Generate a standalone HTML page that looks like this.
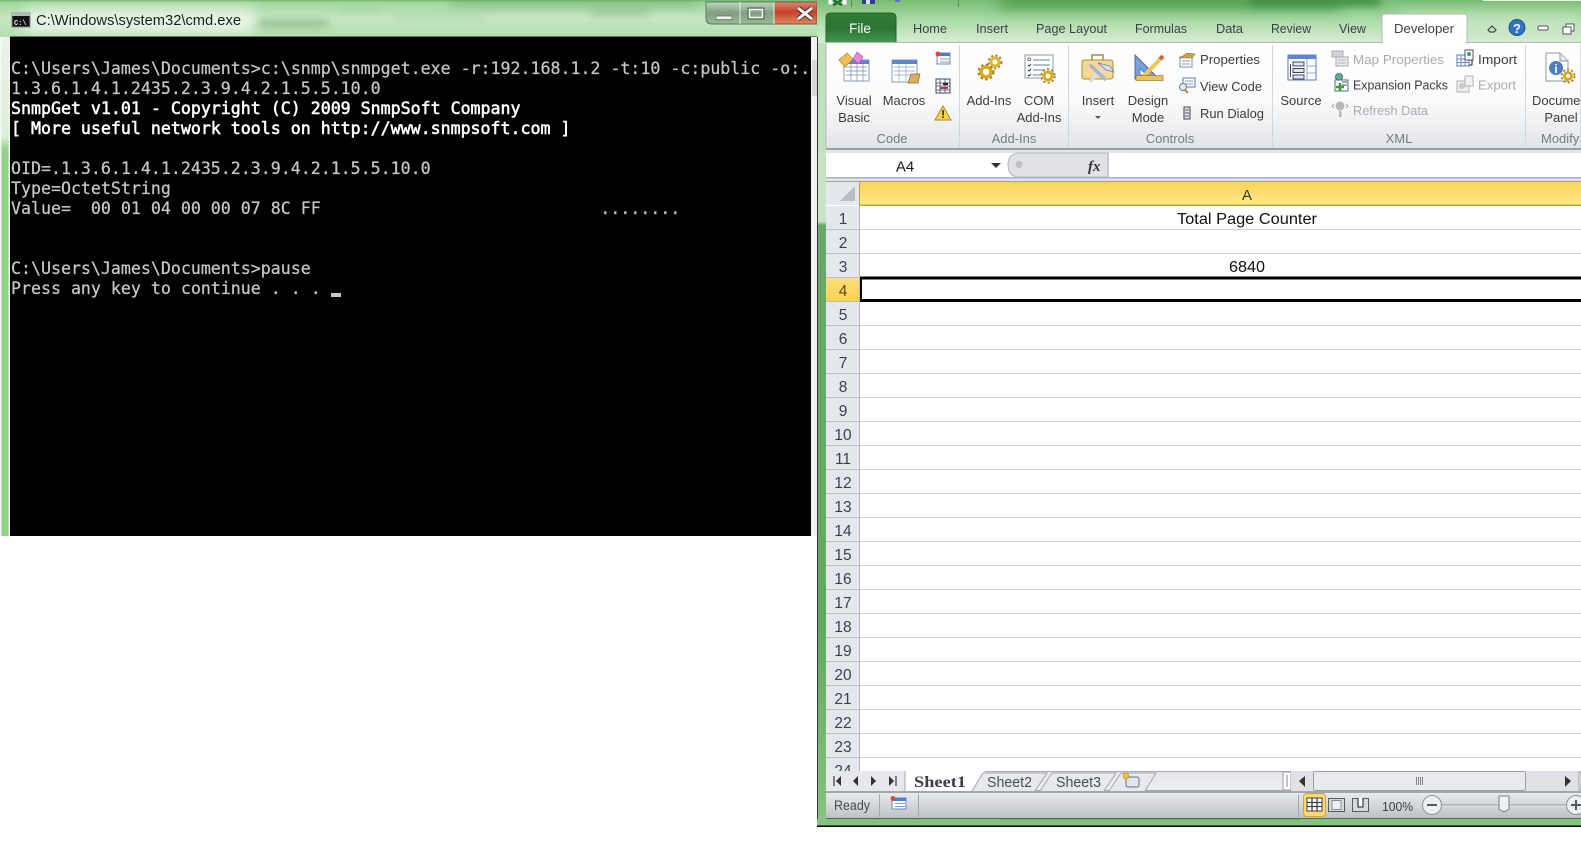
<!DOCTYPE html>
<html><head><meta charset="utf-8"><title>cmd and Excel</title>
<style>
html,body{margin:0;padding:0;background:#fff;width:1581px;height:852px;overflow:hidden}
svg{position:absolute;left:0;top:0;display:block}
text{font-family:"Liberation Sans",sans-serif;white-space:pre}
.c{font-family:"DejaVu Sans Mono","Liberation Mono",monospace;font-size:16.6px;fill:#c6c6c6;stroke:#c6c6c6;stroke-width:.25px}
.b{fill:#fff;stroke:#fff;stroke-width:.55px}
.r{font-size:13px;fill:#3c3c3c}
.g{font-size:13px;fill:#777b80}
.d{font-size:13px;fill:#a8abaf}
.t{font-size:13px;fill:#3c4148}
.n{font-size:15.5px;fill:#3a4250;text-anchor:middle}
.m{text-anchor:middle}
</style></head><body>
<svg width="1581" height="852" viewBox="0 0 1581 852" xmlns="http://www.w3.org/2000/svg">
<defs>
<linearGradient id="tb" x1="0" y1="0" x2="0" y2="1"><stop offset="0" stop-color="#9ed69a"/><stop offset=".5" stop-color="#c6e6c2"/><stop offset="1" stop-color="#b4deaf"/></linearGradient>
<linearGradient id="xt" x1="0" y1="0" x2="0" y2="1"><stop offset="0" stop-color="#77bd74"/><stop offset=".45" stop-color="#a9d9a4"/><stop offset="1" stop-color="#d9eed5"/></linearGradient>
<linearGradient id="lf" x1="0" y1="0" x2="0" y2="1"><stop offset="0" stop-color="#e9f3e7"/><stop offset=".2" stop-color="#dcefd9"/><stop offset=".225" stop-color="#8fd488"/><stop offset="1" stop-color="#8fd488"/></linearGradient>
<linearGradient id="xf" x1="0" y1="0" x2="0" y2="1"><stop offset="0" stop-color="#bfe0ba"/><stop offset=".23" stop-color="#c9e4c5"/><stop offset=".235" stop-color="#68a868"/><stop offset=".75" stop-color="#62a862"/><stop offset="1" stop-color="#86c280"/></linearGradient>
<linearGradient id="rb" x1="0" y1="0" x2="0" y2="1"><stop offset="0" stop-color="#fff"/><stop offset=".55" stop-color="#fafbfb"/><stop offset="1" stop-color="#e2e4e8"/></linearGradient>
<linearGradient id="file" x1="0" y1="0" x2="0" y2="1"><stop offset="0" stop-color="#2f7d36"/><stop offset=".5" stop-color="#2a7531"/><stop offset="1" stop-color="#48964c"/></linearGradient>
<linearGradient id="yl" x1="0" y1="0" x2="0" y2="1"><stop offset="0" stop-color="#fdd25a"/><stop offset="1" stop-color="#ffe983"/></linearGradient>
<linearGradient id="yr" x1="0" y1="0" x2="0" y2="1"><stop offset="0" stop-color="#ffdf7a"/><stop offset="1" stop-color="#fdd155"/></linearGradient>
<linearGradient id="st" x1="0" y1="0" x2="0" y2="1"><stop offset="0" stop-color="#e9eaed"/><stop offset="1" stop-color="#bec1c6"/></linearGradient>
<linearGradient id="cl" x1="0" y1="0" x2="0" y2="1"><stop offset="0" stop-color="#d98a76"/><stop offset=".45" stop-color="#c73f28"/><stop offset="1" stop-color="#dc8a62"/></linearGradient>
<linearGradient id="gl" x1="0" y1="0" x2="0" y2="1"><stop offset="0" stop-color="#c4d6c0"/><stop offset=".5" stop-color="#7f9f7e"/><stop offset="1" stop-color="#9dbb96"/></linearGradient>
<linearGradient id="ts" x1="0" y1="0" x2="0" y2="1"><stop offset="0" stop-color="#e3e5ea"/><stop offset="1" stop-color="#eef0f3"/></linearGradient>
<filter id="bl" x="-30%" y="-100%" width="160%" height="300%"><feGaussianBlur stdDeviation="7"/></filter>
<filter id="bs" x="-30%" y="-100%" width="160%" height="300%"><feGaussianBlur stdDeviation="4"/></filter>
<clipPath id="cc"><rect x="0" y="0" width="811" height="536"/></clipPath>
<clipPath id="tt"><rect x="0" y="0" width="817" height="37"/></clipPath>
<clipPath id="xx"><rect x="817" y="0" width="764" height="43"/></clipPath>
</defs>

<rect width="1581" height="852" fill="#fff"/>

<!-- cmd window frame -->
<rect x="0" y="0" width="817" height="37" fill="url(#tb)"/>
<g clip-path="url(#tt)">
 <rect x="0" y="0" width="817" height="1.500" fill="#6fb56b" opacity=".8"/>
 <rect x="25" y="10" width="230" height="22" fill="#eaf5e8" filter="url(#bl)"/>
 <rect x="258" y="20" width="70" height="7" fill="#86b483" opacity=".8" filter="url(#bs)"/>
 <rect x="340" y="6" width="40" height="5" fill="#9cc998" opacity=".7" filter="url(#bs)"/>
 <rect x="395" y="14" width="90" height="5" fill="#a6d0a2" opacity=".7" filter="url(#bs)"/>
 <rect x="590" y="5" width="60" height="12" fill="#a0cc9c" opacity=".7" filter="url(#bs)"/>
 <rect x="450" y="-6" width="250" height="10" fill="#6aab67" opacity=".8" filter="url(#bl)"/>
</g>
<rect x="0" y="37" width="10" height="499" fill="url(#lf)"/>
<rect x="0" y="37" width="1.500" height="499" fill="#f4f8f3"/>
<rect x="8.500" y="37" width="1.500" height="499" fill="#eef6ec"/>
<rect x="10" y="37" width="801" height="499" fill="#000"/>
<rect x="811" y="37" width="6" height="499" fill="#f1f1f1"/>
<rect x="812" y="60" width="5" height="36" fill="#d8d8d8"/>
<rect x="10" y="36" width="807" height="1" fill="#5e7d5c"/>

<!-- cmd title -->
<rect x="12" y="13" width="18" height="14" fill="#111" stroke="#8b8b8b"/>
<rect x="12" y="13" width="18" height="3" fill="#b9b9b9"/>
<text x="14" y="25" style="font-size:7px;font-weight:bold;fill:#eee;font-family:'Liberation Mono',monospace">C:\</text>
<text x="36" y="25" textLength="205" lengthAdjust="spacingAndGlyphs" style="font-size:15px;fill:#15231a">C:\Windows\system32\cmd.exe</text>

<!-- caption buttons -->
<path d="M706 2H774V24H712Q706 24 706 18Z" fill="url(#gl)" stroke="#5d7a5c"/>
<path d="M774 2H817V24H774Z" fill="url(#cl)" stroke="#8a4a3a"/>
<line x1="740" y1="2" x2="740" y2="24" stroke="#e4efe2"/>
<line x1="774" y1="2" x2="774" y2="24" stroke="#e4efe2"/>
<rect x="716" y="16" width="16" height="3.500" fill="#f2f5f2" stroke="#56685a" stroke-width=".7"/>
<rect x="748" y="8" width="16" height="11" fill="none" stroke="#4a5a4c" stroke-width="1"/>
<rect x="749.500" y="9.500" width="13" height="8" fill="none" stroke="#f0f3f0" stroke-width="1.600"/>
<path d="M798 8L812 19M812 8L798 19" stroke="#40382f" stroke-width="5"/>
<path d="M798 8L812 19M812 8L798 19" stroke="#f6f6f6" stroke-width="3"/>

<!-- cmd text -->
<g clip-path="url(#cc)">
<text class="c" x="11" y="74">C:\Users\James\Documents&gt;c:\snmp\snmpget.exe -r:192.168.1.2 -t:10 -c:public -o:.</text>
<text class="c" x="11" y="94">1.3.6.1.4.1.2435.2.3.9.4.2.1.5.5.10.0</text>
<text class="c b" x="11" y="114">SnmpGet v1.01 - Copyright (C) 2009 SnmpSoft Company</text>
<text class="c b" x="11" y="134">[ More useful network tools on http://www.snmpsoft.com ]</text>
<text class="c" x="11" y="174">OID=.1.3.6.1.4.1.2435.2.3.9.4.2.1.5.5.10.0</text>
<text class="c" x="11" y="194">Type=OctetString</text>
<text class="c" x="11" y="214">Value=  00 01 04 00 00 07 8C FF                            ........</text>
<text class="c" x="11" y="274">C:\Users\James\Documents&gt;pause</text>
<text class="c" x="11" y="294">Press any key to continue . . . </text>
<rect x="331" y="293" width="10" height="4" fill="#c6c6c6"/>
</g>

<!-- Excel frame -->
<rect x="817" y="0" width="764" height="43" fill="url(#xt)"/>
<g clip-path="url(#xx)">
 <rect x="1000" y="-6" width="340" height="14" fill="#4d9a4f" filter="url(#bl)"/>
 <rect x="1250" y="-4" width="130" height="10" fill="#3f8f44" filter="url(#bs)"/>
 <rect x="1400" y="12" width="181" height="30" fill="#cfe8ca" opacity=".6" filter="url(#bl)"/>
 <rect x="1483" y="-2" width="98" height="3" fill="#eef6ec"/>
</g>
<rect x="817" y="37" width="1" height="790" fill="#2f3a30"/>
<rect x="818" y="43" width="8" height="776" fill="url(#xf)"/>
<rect x="817" y="819" width="764" height="7" fill="#85c27f"/>
<rect x="1000" y="819" width="300" height="1.500" fill="#6aa868" opacity=".6"/>
<rect x="817" y="825.500" width="764" height="1.500" fill="#000"/>

<!-- QAT remnants -->
<rect x="828" y="-2" width="19" height="7" fill="#f3f7f2" stroke="#9fb09e"/>
<path d="M833 0L842 5M842 0L833 5" stroke="#1f7a2f" stroke-width="3"/>
<line x1="851.500" y1="0" x2="851.500" y2="7" stroke="#5c8a5c"/>
<rect x="862" y="-2" width="13" height="6" fill="#2e3f8e"/>
<rect x="866" y="0" width="4" height="4" fill="#dfe3f4"/>
<rect x="895" y="0" width="5" height="2" fill="#5f74c4"/>
<line x1="958.500" y1="0" x2="958.500" y2="7" stroke="#5c8a5c"/>

<!-- Tabs -->
<path d="M826 43V18Q826 13 831 13H891Q896 13 896 18V43Z" fill="url(#file)" stroke="#1d6a25"/>
<text x="860" y="33" class="m" style="font-size:13.500px;fill:#fff">File</text>
<text x="913" y="33" textLength="34" lengthAdjust="spacingAndGlyphs" class="t">Home</text>
<text x="976" y="33" textLength="32" lengthAdjust="spacingAndGlyphs" class="t">Insert</text>
<text x="1036" y="33" textLength="71" lengthAdjust="spacingAndGlyphs" class="t">Page Layout</text>
<text x="1135" y="33" textLength="52" lengthAdjust="spacingAndGlyphs" class="t">Formulas</text>
<text x="1216" y="33" textLength="27" lengthAdjust="spacingAndGlyphs" class="t">Data</text>
<text x="1271" y="33" textLength="40" lengthAdjust="spacingAndGlyphs" class="t">Review</text>
<text x="1339" y="33" textLength="27" lengthAdjust="spacingAndGlyphs" class="t">View</text>

<!-- Ribbon -->
<rect x="826" y="42.500" width="755" height="106" fill="url(#rb)" stroke="#b5b9bd"/>
<path d="M1382 43V17Q1382 14 1385 14H1464Q1467 14 1467 17V43Z" fill="#fff" stroke="#b5b9bd"/>
<rect x="1383" y="41" width="83" height="3" fill="#fff"/>
<text x="1394" y="33" textLength="60" lengthAdjust="spacingAndGlyphs" class="t">Developer</text>
<path d="M1488 30L1492 26L1496 30L1494 32H1490Z" fill="none" stroke="#444" stroke-width="1.200"/>
<circle cx="1517" cy="27.500" r="8" fill="#2f73c4" stroke="#1e559c"/>
<text x="1517" y="33" class="m" style="font-size:13px;font-weight:bold;fill:#fff">?</text>
<rect x="1538" y="26" width="10" height="4" rx="1" fill="#fff" stroke="#50565c"/>
<rect x="1566" y="24" width="8" height="7" fill="#fff" stroke="#50565c"/>
<rect x="1563" y="27" width="8" height="7" fill="#fff" stroke="#50565c"/>

<!-- separators -->
<g stroke="#d4d7da">
<line x1="959.500" y1="45" x2="959.500" y2="147"/>
<line x1="1068.500" y1="45" x2="1068.500" y2="147"/>
<line x1="1272.500" y1="45" x2="1272.500" y2="147"/>
<line x1="1525.500" y1="45" x2="1525.500" y2="147"/>
</g>
<rect x="826" y="148" width="755" height="2" fill="#9b9fa4"/>
<rect x="826" y="150" width="755" height="3" fill="#e3e5e9"/>

<!-- ribbon labels -->
<text x="854" y="105" class="r m">Visual</text><text x="854" y="122" class="r m">Basic</text>
<text x="904" y="105" class="r m">Macros</text>
<text x="892" y="143" class="g m">Code</text>
<text x="989" y="105" class="r m">Add-Ins</text>
<text x="1039" y="105" class="r m">COM</text><text x="1039" y="122" class="r m">Add-Ins</text>
<text x="1014" y="143" class="g m">Add-Ins</text>
<text x="1098" y="105" class="r m">Insert</text>
<path d="M1095 116H1101L1098 119Z" fill="#555"/>
<text x="1148" y="105" class="r m">Design</text><text x="1148" y="122" class="r m">Mode</text>
<text x="1200" y="64" textLength="60" lengthAdjust="spacingAndGlyphs" class="r">Properties</text>
<text x="1200" y="91" textLength="62" lengthAdjust="spacingAndGlyphs" class="r">View Code</text>
<text x="1200" y="118" textLength="64" lengthAdjust="spacingAndGlyphs" class="r">Run Dialog</text>
<text x="1170" y="143" class="g m">Controls</text>
<text x="1301" y="105" class="r m">Source</text>
<text x="1353" y="64" textLength="91" lengthAdjust="spacingAndGlyphs" class="d">Map Properties</text>
<text x="1353" y="89.500" textLength="95" lengthAdjust="spacingAndGlyphs" class="r">Expansion Packs</text>
<text x="1353" y="115" textLength="75" lengthAdjust="spacingAndGlyphs" class="d">Refresh Data</text>
<text x="1478" y="64" textLength="39" lengthAdjust="spacingAndGlyphs" class="r">Import</text>
<text x="1478" y="89.500" textLength="38" lengthAdjust="spacingAndGlyphs" class="d">Export</text>
<text x="1399" y="143" class="g m">XML</text>
<text x="1532" y="105" class="r">Document</text>
<text x="1561" y="122" class="r m">Panel</text>
<text x="1541" y="143" class="g">Modify</text>

<!-- Visual Basic icon -->
<rect x="844" y="60" width="25" height="21" fill="#fff" stroke="#8d9bb0"/>
<rect x="844" y="60" width="25" height="4" fill="#5d86d2"/>
<path d="M846 67H867M846 71H867M846 75H867M851 64V81M857 64V81M863 64V81" stroke="#8fa4c6" stroke-width=".9"/>
<path d="M839 60L847 53L853 59L845 67Z" fill="#f0bf55" stroke="#a87d22" stroke-width=".6"/>
<path d="M853 59L857 52L863 57L859 64Z" fill="#e88be0" stroke="#a845a0" stroke-width=".6"/>
<!-- Macros icon -->
<rect x="892" y="60" width="25" height="22" fill="#fff" stroke="#8d9bb0"/>
<rect x="892" y="60" width="25" height="4" fill="#5d86d2"/>
<path d="M894 67H915M894 71H915M894 75H915M899 64V81M906 64V81" stroke="#a9b8d0" stroke-width=".9"/>
<path d="M911 74H920L918 83H908Z" fill="#d8b060" stroke="#8c6c22" stroke-width=".7"/>
<!-- small code icons -->
<rect x="937" y="53" width="13" height="11" fill="#fff" stroke="#6d86b4"/><rect x="937" y="53" width="13" height="3" fill="#4d7ed2"/><circle cx="938" cy="54" r="2.500" fill="#d94a3a"/>
<path d="M940 59H949M940 62H949" stroke="#7f9ac8"/>
<rect x="936" y="79" width="14" height="14" fill="#fff" stroke="#3e4a6a"/>
<path d="M936 83H950M936 86H950M936 90H950M940 79V93M945 79V93" stroke="#3e4a6a" stroke-width=".8"/>
<path d="M940 88H948" stroke="#c43456" stroke-width="2"/>
<path d="M943 83H948V85H943Z" fill="#222"/>
<path d="M943 106L951 120H935Z" fill="#f8d34c" stroke="#b08a20"/>
<rect x="942.300" y="110" width="1.500" height="5.500" fill="#222"/><rect x="942.300" y="116.500" width="1.500" height="1.500" fill="#222"/>
<!-- Add-ins gears -->
<circle cx="986" cy="72" r="5" fill="none" stroke="#d8a820" stroke-width="3.500"/>
<circle cx="986" cy="72" r="7.500" fill="none" stroke="#a5811e" stroke-width="2" stroke-dasharray="2.500 2.500"/>
<circle cx="995" cy="62" r="4" fill="none" stroke="#e0b432" stroke-width="3"/>
<circle cx="995" cy="62" r="6.500" fill="none" stroke="#a5811e" stroke-width="1.800" stroke-dasharray="2.200 2.200"/>
<!-- COM icon -->
<rect x="1025" y="55" width="28" height="23" fill="#fff" stroke="#8e97a4"/>
<path d="M1033 60H1050M1033 65H1050M1033 70H1045M1033 75H1043" stroke="#6a7fa6"/>
<rect x="1028" y="58" width="2.500" height="2.500" fill="none" stroke="#444" stroke-width=".7"/>
<path d="M1028 65l1 1 2-2M1028 70l1 1 2-2M1028 75l1 1 2-2" stroke="#333" fill="none"/>
<circle cx="1048" cy="76" r="4" fill="#fff" stroke="#d8a820" stroke-width="3"/>
<circle cx="1048" cy="76" r="6.800" fill="none" stroke="#a5811e" stroke-width="1.800" stroke-dasharray="2.200 2.200"/>
<!-- Insert toolbox -->
<path d="M1084 60H1110Q1113 60 1113 63V76Q1113 79 1110 79H1084Q1082 79 1082 76V63Q1082 60 1084 60Z" fill="#f5d79a" stroke="#b08a35"/>
<path d="M1092 60V55H1103V60" fill="none" stroke="#b08a35" stroke-width="1.500"/>
<path d="M1090 82L1104 66" stroke="#d8dfe8" stroke-width="3.500"/>
<path d="M1090 65L1106 80" stroke="#a9b6c6" stroke-width="3.500"/>
<path d="M1098 63L1110 66L1114 72L1106 70Z" fill="#d5deea" stroke="#6a7890" stroke-width=".7"/>
<!-- Design mode -->
<path d="M1135 55V79H1159Z" fill="#7ba0d8" stroke="#4a6ea8"/>
<path d="M1140 69V75H1147Z" fill="#fff" stroke="#4a6ea8" stroke-width=".7"/>
<path d="M1144 76L1162 57" stroke="#f0c850" stroke-width="4"/>
<path d="M1160 59L1163 56" stroke="#d45a50" stroke-width="4"/>
<rect x="1136" y="75.500" width="27" height="5" fill="#e8c45a" stroke="#9a7c22" stroke-width=".7"/>
<!-- Properties / view code / run dialog icons -->
<rect x="1180" y="57" width="12" height="10" fill="#fff" stroke="#7c8ca6"/>
<path d="M1182 61H1190M1182 64H1190" stroke="#7f9ac8"/>
<path d="M1180 58L1187 53L1195 54L1192 58Z" fill="#c9a24a" stroke="#86702c" stroke-width=".6"/>
<rect x="1183" y="78" width="12" height="9" fill="#fff" stroke="#5c78a8"/><path d="M1185 81H1193M1185 84H1193" stroke="#7f9ac8"/>
<circle cx="1183" cy="87" r="3.500" fill="#dfeaf5" stroke="#6e7a88"/><path d="M1185 90L1188 93" stroke="#c88a2c" stroke-width="2"/>
<path d="M1184 107H1190V119H1184Z" fill="#e2e6ea" stroke="#3c4652"/><path d="M1185 110H1189M1185 113H1189M1185 116H1189" stroke="#55606e"/>
<!-- Source icon -->
<rect x="1288" y="55" width="28" height="25" fill="#fff" stroke="#5a7cb8"/>
<rect x="1288" y="55" width="28" height="4" fill="#5d86d2"/>
<path d="M1307 59V80M1307 66H1316M1307 73H1316" stroke="#8fa8d0"/>
<rect x="1293" y="62" width="11" height="4" fill="#dbe5f5" stroke="#445"/><rect x="1293" y="68.500" width="11" height="4" fill="#dbe5f5" stroke="#445"/><rect x="1293" y="75" width="11" height="4" fill="#dbe5f5" stroke="#445"/>
<path d="M1290.500 64V77" stroke="#445"/>
<!-- XML small icons -->
<rect x="1332" y="51" width="11" height="6" fill="#d0d2d6" stroke="#a8abb0"/>
<rect x="1336" y="57" width="12" height="9" fill="#e9eaec" stroke="#a8abb0"/>
<path d="M1338 60H1346M1338 63H1346" stroke="#b4b6ba"/>
<circle cx="1339" cy="77" r="3.500" fill="#5fb08a" stroke="#3d6e8e"/>
<rect x="1335" y="80" width="13" height="11" fill="#fff" stroke="#5a6a7a"/>
<path d="M1342 82H1347M1342 85H1347" stroke="#556"/>
<path d="M1336 87H1344M1340 83V91" stroke="#3f9a3f" stroke-width="2.500"/>
<circle cx="1340" cy="106" r="4.500" fill="#b5b7ba"/>
<path d="M1334 104L1332 106L1334 108M1346 104L1348 106L1346 108" fill="none" stroke="#aaa"/>
<rect x="1339" y="111" width="2.500" height="6" fill="#b5b7ba"/>
<rect x="1457" y="55" width="12" height="11" fill="#fff" stroke="#5a7cb8"/>
<path d="M1457 59H1469M1457 62.500H1469M1461 55V66M1465 55V66" stroke="#6a8cc8"/>
<rect x="1465" y="50" width="8" height="10" fill="#fff" stroke="#4a5560"/>
<circle cx="1469" cy="54" r="2" fill="#3f9a6a"/>
<path d="M1472 60V65H1469" fill="none" stroke="#222"/>
<rect x="1457" y="81" width="12" height="11" fill="#eceded" stroke="#b0b2b6"/>
<rect x="1465" y="76" width="8" height="10" fill="#f3f3f4" stroke="#b0b2b6"/>
<circle cx="1462" cy="86" r="3" fill="#c6c8cb"/>
<!-- Document panel icon -->
<path d="M1546 53H1560L1568 61V81H1546Z" fill="#fff" stroke="#8e97a4"/>
<path d="M1560 53V61H1568" fill="#e3e8ee" stroke="#8e97a4"/>
<circle cx="1556" cy="68" r="7" fill="#4f7dc4"/>
<text x="1556" y="73" class="m" style="font-size:12px;font-weight:bold;fill:#fff">i</text>
<circle cx="1568" cy="76" r="3.500" fill="#fff" stroke="#d8a820" stroke-width="3"/>
<circle cx="1568" cy="76" r="6.500" fill="none" stroke="#a5811e" stroke-width="1.800" stroke-dasharray="2.200 2"/>

<!-- Formula bar -->
<rect x="826" y="153" width="755" height="24" fill="#fff"/>
<rect x="826" y="177" width="755" height="1.500" fill="#aeb1b6"/>
<rect x="826" y="178.500" width="755" height="2.500" fill="#e2e4e8"/>
<text x="905" y="171.500" class="m" style="font-size:15px;fill:#1a1a1a">A4</text>
<path d="M991 163H1001L996 168Z" fill="#333"/>
<path d="M1108 153H1020Q1008 153 1008 165Q1008 177 1020 177H1108Z" fill="#dfe1e5" stroke="#b3b6ba"/>
<circle cx="1019" cy="164.500" r="3.500" fill="#bfc2c6"/>
<line x1="1108.500" y1="153" x2="1108.500" y2="177" stroke="#c4c7cb"/>
<text x="1088" y="171" style="font-family:'Liberation Serif',serif;font-style:italic;font-weight:bold;font-size:15px;fill:#333">fx</text>

<!-- Grid headers -->
<rect x="826" y="181" width="34" height="24" fill="#e4e7ec"/>
<path d="M855 186V201H840Z" fill="#b9bcc1"/>
<rect x="860" y="181" width="721" height="24" fill="url(#yl)"/>
<rect x="826" y="181" width="755" height="1" fill="#9b9fa4"/>
<rect x="860" y="204.500" width="721" height="1.500" fill="#c2a03c"/>
<line x1="859.500" y1="181" x2="859.500" y2="206" stroke="#c2a03c"/>
<text x="1247" y="200" class="m" style="font-size:15px;fill:#3a3a2a">A</text>

<!-- Row header column -->
<rect x="826" y="206" width="34" height="565" fill="#e4e7ec"/>
<rect x="860" y="206" width="721" height="565" fill="#fff"/>
<rect x="826" y="277" width="34" height="24" fill="url(#yr)"/>
<line x1="859.500" y1="206" x2="859.500" y2="771" stroke="#b4b7bc"/>
<g stroke="#d4d4d4">
<path d="M860 229.500H1581M860 253.500H1581M860 277.500H1581M860 301.500H1581M860 325.500H1581M860 349.500H1581M860 373.500H1581M860 397.500H1581M860 421.500H1581M860 445.500H1581M860 469.500H1581M860 493.500H1581M860 517.500H1581M860 541.500H1581M860 565.500H1581M860 589.500H1581M860 613.500H1581M860 637.500H1581M860 661.500H1581M860 685.500H1581M860 709.500H1581M860 733.500H1581M860 757.500H1581"/>
</g>
<g stroke="#bcc0c6">
<path d="M826 229.500H860M826 253.500H860M826 277.500H860M826 301.500H860M826 325.500H860M826 349.500H860M826 373.500H860M826 397.500H860M826 421.500H860M826 445.500H860M826 469.500H860M826 493.500H860M826 517.500H860M826 541.500H860M826 565.500H860M826 589.500H860M826 613.500H860M826 637.500H860M826 661.500H860M826 685.500H860M826 709.500H860M826 733.500H860M826 757.500H860"/>
</g>
<text class="n" x="843" y="224">1</text><text class="n" x="843" y="248">2</text><text class="n" x="843" y="272">3</text><text class="n" x="843" y="296" style="fill:#5e4a12">4</text>
<text class="n" x="843" y="320">5</text><text class="n" x="843" y="344">6</text><text class="n" x="843" y="368">7</text><text class="n" x="843" y="392">8</text>
<text class="n" x="843" y="416">9</text><text class="n" x="843" y="440">10</text><text class="n" x="843" y="464">11</text><text class="n" x="843" y="488">12</text>
<text class="n" x="843" y="512">13</text><text class="n" x="843" y="536">14</text><text class="n" x="843" y="560">15</text><text class="n" x="843" y="584">16</text>
<text class="n" x="843" y="608">17</text><text class="n" x="843" y="632">18</text><text class="n" x="843" y="656">19</text><text class="n" x="843" y="680">20</text>
<text class="n" x="843" y="704">21</text><text class="n" x="843" y="728">22</text><text class="n" x="843" y="752">23</text><text class="n" x="843" y="776">24</text>

<!-- Cells -->
<text x="1177" y="224" textLength="140" lengthAdjust="spacingAndGlyphs" style="font-size:15.5px;fill:#111">Total Page Counter</text>
<text x="1229" y="272" textLength="36" lengthAdjust="spacingAndGlyphs" style="font-size:15.5px;fill:#111">6840</text>
<path d="M860 278H1581M860 300.500H1581" stroke="#000" stroke-width="3"/>
<path d="M861 277V302" stroke="#000" stroke-width="2"/>

<!-- Sheet tabs bar -->
<rect x="826" y="771" width="755" height="20" fill="url(#ts)"/>
<rect x="826" y="771" width="755" height="1" fill="#a6a9ae"/>
<rect x="826" y="790" width="755" height="3" fill="#a3a6ab"/>
<rect x="826" y="771" width="79" height="20" fill="#e6e8ec"/>
<path d="M834 776V786" stroke="#333" stroke-width="1.200"/><path d="M841 776L836 781L841 786Z" fill="#333"/>
<path d="M858 776L853 781L858 786Z" fill="#333"/>
<path d="M871 776L876 781L871 786Z" fill="#333"/>
<path d="M889 776L894 781L889 786Z" fill="#333"/><path d="M896 776V786" stroke="#333" stroke-width="1.200"/>
<path d="M905 771V791H972L985 771Z" fill="#fff"/>
<path d="M905 771V791" stroke="#a6a9ae"/>
<path d="M972 791L983 773H1047L1035 791M1040 791L1052 773H1116L1104 791M1109 791L1121 773H1156L1145 791" fill="#e7e9ed" stroke="#a3a6ab"/>
<text x="914" y="787" textLength="52" lengthAdjust="spacingAndGlyphs" style="font-family:'Liberation Serif',serif;font-weight:bold;font-size:16px;fill:#3a3f48">Sheet1</text>
<text x="987" y="787" textLength="45" lengthAdjust="spacingAndGlyphs" style="font-size:14.500px;fill:#4a4f58">Sheet2</text>
<text x="1056" y="787" textLength="45" lengthAdjust="spacingAndGlyphs" style="font-size:14.500px;fill:#4a4f58">Sheet3</text>
<rect x="1126" y="777" width="13" height="10" rx="2" fill="#dfe6ee" stroke="#5f6d80"/>
<circle cx="1126" cy="776" r="3" fill="#f0c23c" stroke="#b48820" stroke-width=".6"/>

<!-- scrollbar -->
<rect x="1283" y="772" width="8" height="18" fill="#fff" stroke="#9a9da2"/><line x1="1287" y1="775" x2="1287" y2="787" stroke="#888"/>
<rect x="1291" y="771" width="290" height="20" fill="#dfe1e6"/>
<path d="M1305 776L1299 781L1305 787Z" fill="#333"/>
<rect x="1313.500" y="771.500" width="212" height="19" rx="2" fill="#e8eaee" stroke="#9a9da2"/>
<path d="M1416.500 777V785M1418.500 777V785M1420.500 777V785M1422.500 777V785" stroke="#80848a"/>
<path d="M1565 776L1571 781L1565 787Z" fill="#333"/>
<rect x="1579" y="772" width="2" height="18" fill="#fff" stroke="#9a9da2"/>

<!-- status bar -->
<rect x="826" y="793" width="755" height="25" fill="url(#st)"/>
<rect x="826" y="818" width="755" height="1" fill="#4d6a4e"/>
<text x="834" y="810" textLength="36" lengthAdjust="spacingAndGlyphs" style="font-size:13.500px;fill:#474b52">Ready</text>
<path d="M879.500 794V817M918.500 794V817M1298.500 794V817" stroke="#a3a6ab"/>
<rect x="892" y="798" width="14" height="11" fill="#fff" stroke="#6d86b4"/><rect x="892" y="798" width="14" height="3" fill="#4d7ed2"/><circle cx="893" cy="798.500" r="2.500" fill="#d94a3a"/>
<path d="M895 803.500H905M895 806.500H905" stroke="#7f9ac8"/>
<rect x="1303.500" y="793.500" width="22" height="23" rx="3" fill="#fdd970" stroke="#c9a448"/>
<rect x="1307" y="798" width="15" height="13" fill="#fff" stroke="#3f434a"/>
<path d="M1307 802.500H1322M1307 806.500H1322M1312 798V811M1317 798V811" stroke="#3f434a" stroke-width="1.300"/>
<rect x="1328.500" y="798.500" width="16" height="13" fill="#d6d8dc" stroke="#585c62"/><rect x="1332" y="800.500" width="9" height="9" fill="#eceef0" stroke="#8a8d92"/>
<rect x="1352.500" y="798.500" width="16" height="13" fill="#d6d8dc" stroke="#585c62"/><path d="M1358 798V807H1363V798" fill="#fff" stroke="#3f434a" stroke-width="1.300"/>
<text x="1382" y="811" textLength="31" lengthAdjust="spacingAndGlyphs" style="font-size:13px;fill:#3c4148">100%</text>
<path d="M1442 805H1567" stroke="#999ca1"/>
<path d="M1442 806H1567" stroke="#eceef0"/>
<circle cx="1432" cy="805" r="9.500" fill="#eceef0" stroke="#8e9196"/>
<path d="M1427 805H1437" stroke="#555a60" stroke-width="2"/>
<path d="M1499 796H1509V809L1504 812L1499 809Z" fill="#eef0f2" stroke="#777b80"/>
<circle cx="1576" cy="805" r="9.500" fill="#eceef0" stroke="#8e9196"/>
<path d="M1571 805H1581M1576 800V810" stroke="#555a60" stroke-width="2"/>
</svg>
</body></html>
